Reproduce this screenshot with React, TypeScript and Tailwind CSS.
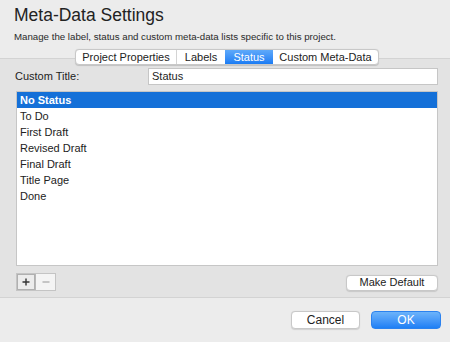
import React from 'react';

const tabs = ['Project Properties', 'Labels', 'Status', 'Custom Meta-Data'];
const statuses = ['No Status', 'To Do', 'First Draft', 'Revised Draft', 'Final Draft', 'Title Page', 'Done'];

export default function App() {
  const active = 'Status';
  const selected = 0;

  return (
    <div
      className="w-[450px] h-[342px] bg-[#ececec] flex flex-col text-[#1d1d1d] overflow-hidden"
      style={{ fontFamily: '"Liberation Sans", Arial, sans-serif' }}
    >
      {/* Header */}
      <div className="h-[49px] px-[14px] pt-[5px]">
        <h1 className="text-[17.5px] leading-[21px] text-[#222]">Meta-Data Settings</h1>
        <p className="text-[9.7px] leading-[12px] mt-[5px] text-[#2a2a2a]">
          Manage the label, status and custom meta-data lists specific to this project.
        </p>
      </div>

      {/* Tabs */}
      <div className="relative z-10 flex pl-[75px] -mb-[7px]">
        <div className="flex h-[16px] bg-white rounded-[4px] border border-[#c8c8c8] shadow-[0_0.5px_1px_rgba(0,0,0,0.15)] overflow-hidden">
          {tabs.map((t, i) => (
            <div
              key={t}
              className={`flex items-center justify-center text-[11px] leading-none ${
                i === 0 ? 'w-[100px]' : i === 1 ? 'w-[49px]' : i === 2 ? 'w-[48px]' : 'w-[105px]'
              } ${
                t === active
                  ? 'bg-gradient-to-b from-[#5ea9fa] to-[#1a7cf4] text-white'
                  : 'text-[#222]'
              } ${i > 0 && t !== active && tabs[i - 1] !== active ? 'border-l border-[#d4d4d4]' : ''}`}
            >
              {t}
            </div>
          ))}
        </div>
      </div>

      {/* Panel */}
      <div className="h-[240px] bg-[#e3e3e3] border-t border-b border-[#d3d3d3] pl-[16px] pr-[12px] pt-[9px] flex flex-col">
        <div className="flex items-center h-[17px]">
          <span className="w-[133px] text-[11px] -ml-[1px]">Custom Title:</span>
          <div className="flex-1 h-[17px] bg-white border border-[#c6c6c6] flex items-center px-[3px] text-[11px]">
            Status
          </div>
        </div>

        <div className="mt-[6px] h-[175px] bg-white border border-[#c6c6c6] flex flex-col">
          {statuses.map((s, i) => (
            <div
              key={s}
              className={`h-[16px] flex items-center px-[3px] text-[11px] ${
                i === selected ? 'bg-[#1470d8] text-white font-bold' : 'text-[#222]'
              }`}
            >
              {s}
            </div>
          ))}
        </div>

        <div className="mt-[7px] flex items-center justify-between">
          <div className="flex h-[18px] border border-[#c4c4c4] bg-[#f4f4f4]">
            <div className="w-[19px] flex items-center justify-center border-r border-[#b8b8b8] bg-[#ececec] shadow-[inset_0_0_0_1px_#b0b0b0]">
              <svg width="8" height="8" viewBox="0 0 8 8">
                <path d="M4 0.5v7M0.5 4h7" stroke="#333" strokeWidth="1.4" />
              </svg>
            </div>
            <div className="w-[19px] flex items-center justify-center">
              <svg width="8" height="8" viewBox="0 0 8 8">
                <path d="M0.5 4h7" stroke="#b0b0b0" strokeWidth="1.4" />
              </svg>
            </div>
          </div>
          <button className="w-[92px] h-[16px] bg-white rounded-[4px] border border-[#c8c8c8] shadow-[0_0.5px_1px_rgba(0,0,0,0.12)] text-[11px] leading-none text-[#222] mt-[1px]">
            Make Default
          </button>
        </div>
      </div>

      {/* Footer */}
      <div className="flex justify-end gap-[11px] pr-[9px] pt-[13px]">
        <button className="w-[69px] h-[18px] bg-white rounded-[4px] border border-[#c8c8c8] shadow-[0_0.5px_1px_rgba(0,0,0,0.12)] text-[12px] leading-none text-[#222]">
          Cancel
        </button>
        <button className="w-[70px] h-[18px] rounded-[4px] bg-gradient-to-b from-[#6cb3fa] to-[#1d7ff5] border border-[#2b82ef] text-[12px] leading-none text-white">
          OK
        </button>
      </div>
    </div>
  );
}
